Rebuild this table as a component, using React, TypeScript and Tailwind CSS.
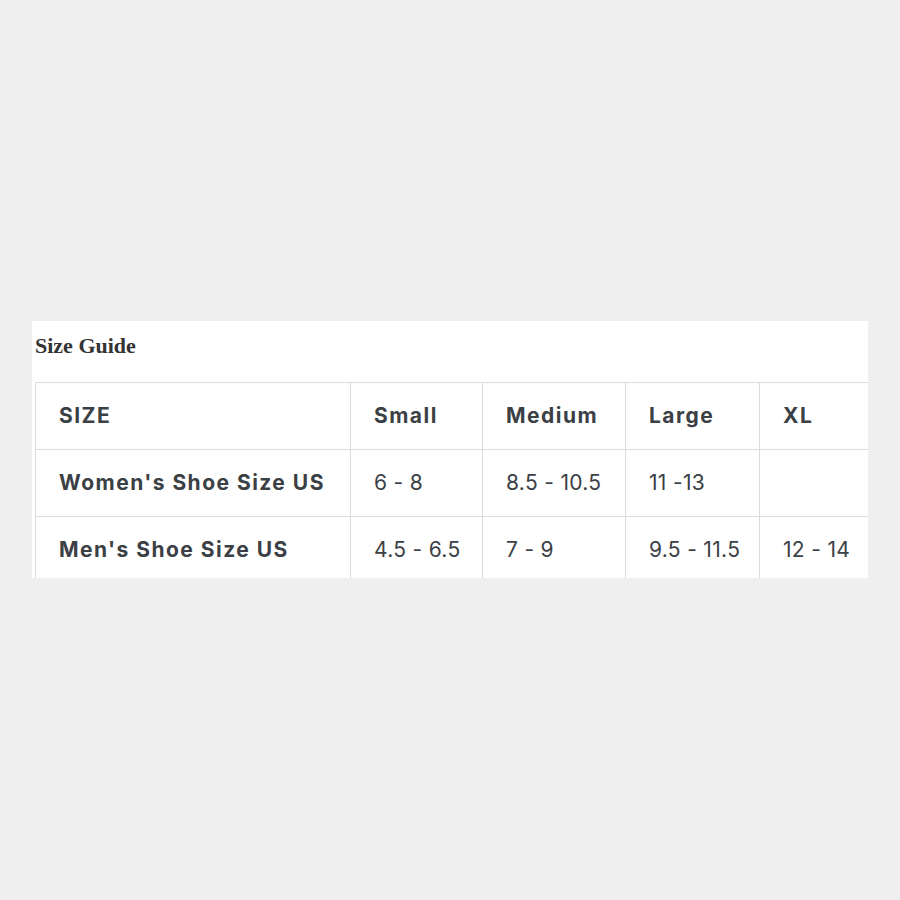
const cols = ['w-[315px]', 'w-[132px]', 'w-[143px]', 'w-[134px]', 'w-[140px]']

const rows = [
  { head: true, cells: ['SIZE', 'Small', 'Medium', 'Large', 'XL'] },
  { head: false, cells: ["Women's Shoe Size US", '6 - 8', '8.5 - 10.5', '11 -13', ''] },
  { head: false, cells: ["Men's Shoe Size US", '4.5 - 6.5', '7 - 9', '9.5 - 11.5', '12 - 14'] },
]

export default function App() {
  return (
    <div className="h-[900px] w-[900px] bg-[#efefef] pl-[32px] pt-[321px]">
      <div className="h-[257px] w-[836px] overflow-hidden bg-white pl-[3px]">
        <h2 className="pt-[9px] pb-[21px] text-[22px] font-bold leading-[31px] text-[#333] [font-family:'Liberation_Serif',serif]">
          Size Guide
        </h2>
        <div className="flex w-[870px] flex-col [font-family:Inter,sans-serif] text-[21px] text-[#3b4045]">
          {rows.map((row, r) => (
            <div key={r} className="flex">
              {row.cells.map((c, i) => {
                const bold = row.head || i === 0
                return (
                  <div
                    key={i}
                    className={`${cols[i]} flex h-[67px] shrink-0 items-center border-l border-t border-[#dcdcdc] pl-[23px] ${bold ? 'font-bold tracking-[0.07em]' : 'font-normal tracking-[0.015em]'}`}
                  >
                    {c}
                  </div>
                )
              })}
            </div>
          ))}
        </div>
      </div>
    </div>
  )
}
